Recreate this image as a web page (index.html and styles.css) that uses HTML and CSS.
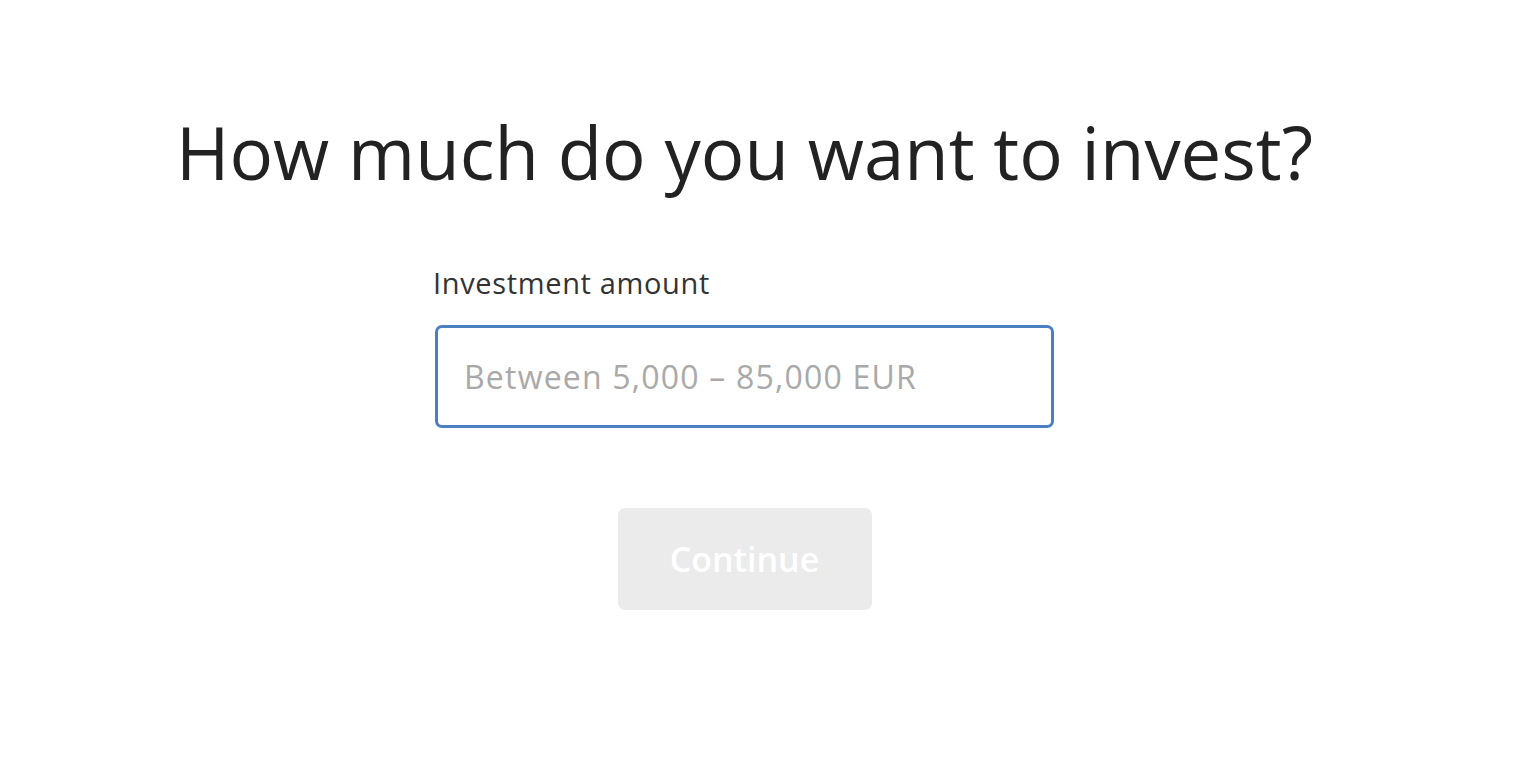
FILE: index.html
```html
<!DOCTYPE html>
<html lang="en">
<head>
<meta charset="utf-8">
<title>Investment</title>
<link rel="stylesheet" href="styles.css">
</head>
<body>
<main class="page">
  <h1 class="title">How much do you want to invest?</h1>
  <form class="form">
    <label class="label" for="amount">Investment amount</label>
    <input class="input" id="amount" type="text" placeholder="Between 5,000 – 85,000 EUR">
    <button class="button" type="button" disabled>Continue</button>
  </form>
</main>
</body>
</html>
```
FILE: styles.css
```css
html, body {
  margin: 0;
  padding: 0;
  background: #ffffff;
}
body {
  font-family: "Open Sans", "Liberation Sans", sans-serif;
  color: #222222;
}
.page {
  width: 1489px;
  display: flex;
  flex-direction: column;
  align-items: center;
  padding-top: 102px;
}
.title {
  margin: 0;
  font-size: 72.5px;
  font-weight: 400;
  line-height: 100px;
  color: #222222;
}
.form {
  display: flex;
  flex-direction: column;
  align-items: center;
  margin-top: 61px;
}
.label {
  align-self: flex-start;
  margin-left: -2px;
  font-size: 29px;
  letter-spacing: 0.65px;
  line-height: 40px;
  color: #333333;
  margin-bottom: 22px;
}
.input {
  box-sizing: border-box;
  width: 619px;
  height: 103px;
  border: 3px solid #4a7fc2;
  border-radius: 7px;
  padding: 0 26px;
  font-family: inherit;
  font-size: 32px;
  letter-spacing: 1.2px;
  color: #222222;
  outline: none;
}
.input::placeholder {
  color: #a9a9a9;
}
.button {
  box-sizing: border-box;
  margin-top: 80px;
  width: 254px;
  height: 102px;
  padding: 0;
  border: none;
  border-radius: 7px;
  background: #ebebeb;
  color: #ffffff;
  font-family: inherit;
  font-size: 34px;
  font-weight: 600;
}
```
